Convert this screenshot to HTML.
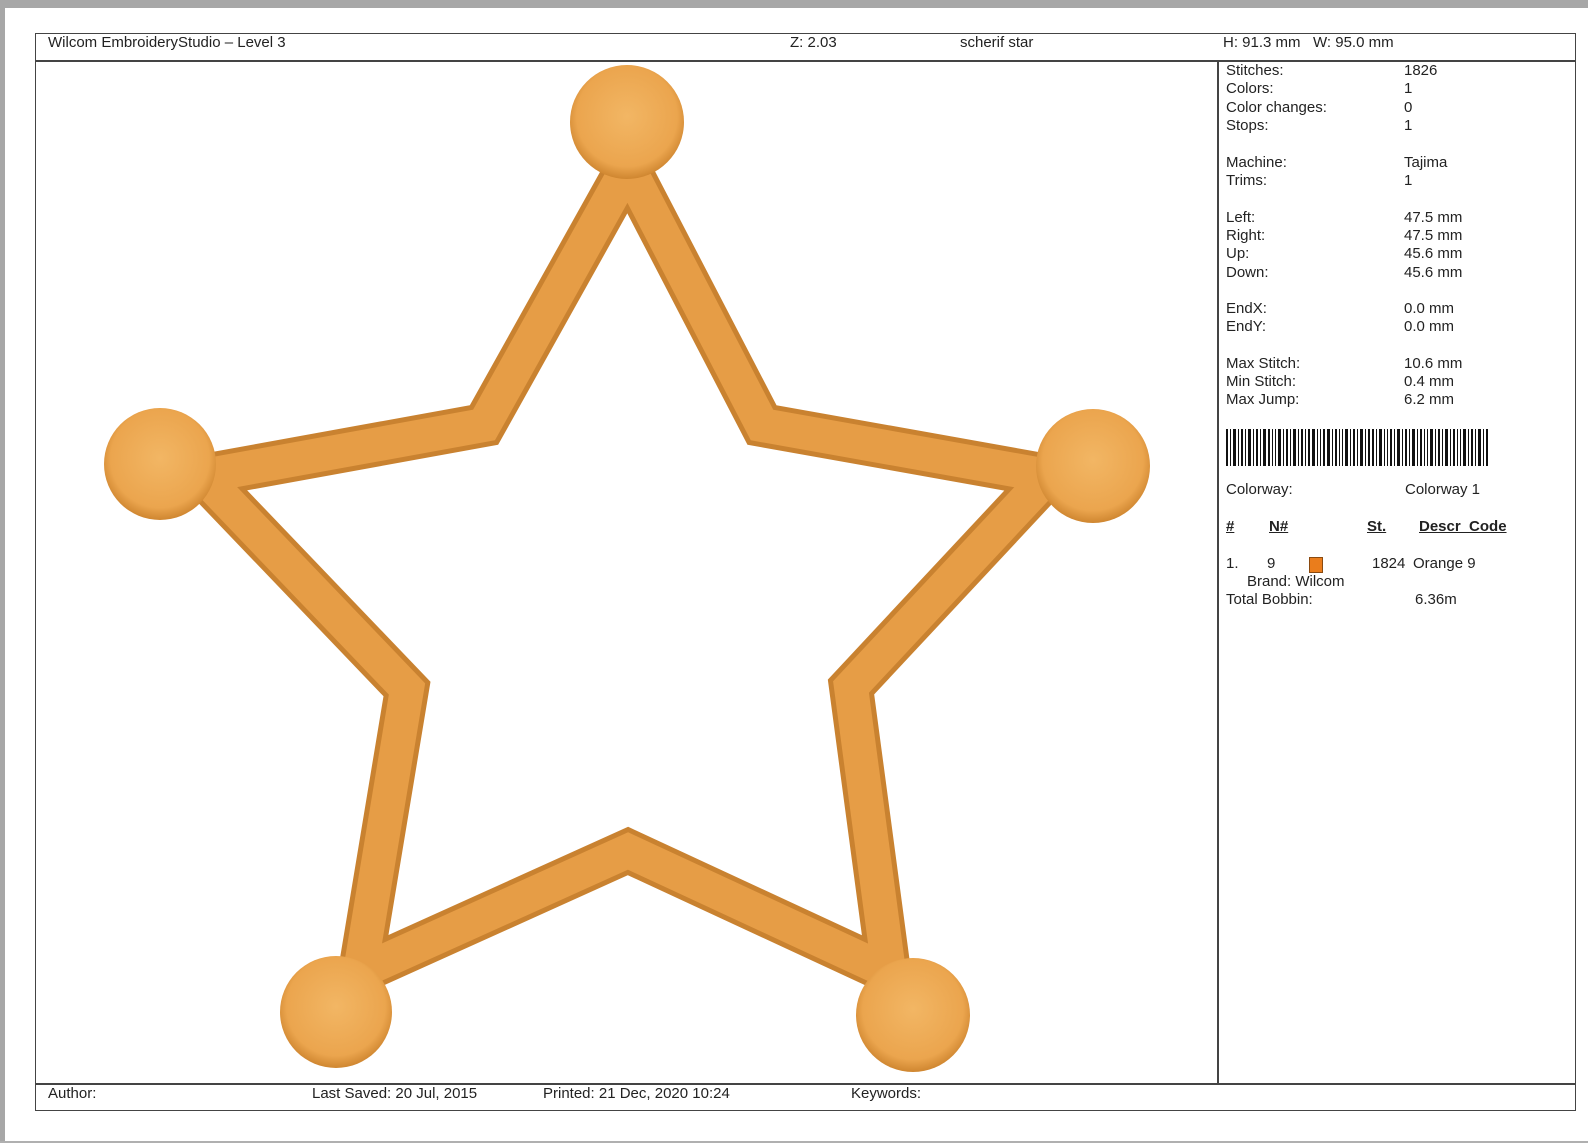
<!DOCTYPE html>
<html><head><meta charset="utf-8">
<style>
html,body{margin:0;padding:0;}
body{width:1588px;height:1143px;position:relative;background:#fff;overflow:hidden;font-family:"Liberation Sans",sans-serif;font-size:15px;color:#222;}
.t{position:absolute;white-space:nowrap;line-height:18px;transform:translateY(-9px);letter-spacing:0px;}
.u{text-decoration:underline;font-weight:bold;}
.r .t{margin-top:1px;}
</style></head><body>
<div style="position:absolute;left:0;top:0;width:1588px;height:8px;background:#a7a7a7"></div>
<div style="position:absolute;left:0;top:0;width:5px;height:1143px;background:#a7a7a7"></div>
<div style="position:absolute;left:0;top:1141px;width:1588px;height:2px;background:#b0b0b0"></div>
<div style="position:absolute;left:35px;top:33px;width:1541px;height:1078px;border:1.5px solid #444;box-sizing:border-box"></div>
<div style="position:absolute;left:35px;top:60px;width:1541px;height:1.5px;background:#444"></div>
<div style="position:absolute;left:35px;top:1083px;width:1541px;height:1.5px;background:#444"></div>
<div style="position:absolute;left:1217px;top:60px;width:1.5px;height:1024px;background:#444"></div>

<div class="t" style="left:48px;top:43px">Wilcom EmbroideryStudio – Level 3</div>
<div class="t" style="left:790px;top:43px">Z: 2.03</div>
<div class="t" style="left:960px;top:43px">scherif star</div>
<div class="t" style="left:1223px;top:43px">H: 91.3 mm&nbsp;&nbsp;&nbsp;W: 95.0 mm</div>

<div class="t" style="left:48px;top:1094px">Author:</div>
<div class="t" style="left:312px;top:1094px">Last Saved: 20 Jul, 2015</div>
<div class="t" style="left:543px;top:1094px">Printed: 21 Dec, 2020 10:24</div>
<div class="t" style="left:851px;top:1094px">Keywords:</div>

<div class="r">
<div class="t" style="left:1226px;top:70px">Stitches:</div><div class="t" style="left:1404px;top:70px">1826</div>
<div class="t" style="left:1226px;top:88px">Colors:</div><div class="t" style="left:1404px;top:88px">1</div>
<div class="t" style="left:1226px;top:107px">Color changes:</div><div class="t" style="left:1404px;top:107px">0</div>
<div class="t" style="left:1226px;top:125px">Stops:</div><div class="t" style="left:1404px;top:125px">1</div>
<div class="t" style="left:1226px;top:162px">Machine:</div><div class="t" style="left:1404px;top:162px">Tajima</div>
<div class="t" style="left:1226px;top:180px">Trims:</div><div class="t" style="left:1404px;top:180px">1</div>
<div class="t" style="left:1226px;top:217px">Left:</div><div class="t" style="left:1404px;top:217px">47.5 mm</div>
<div class="t" style="left:1226px;top:235px">Right:</div><div class="t" style="left:1404px;top:235px">47.5 mm</div>
<div class="t" style="left:1226px;top:253px">Up:</div><div class="t" style="left:1404px;top:253px">45.6 mm</div>
<div class="t" style="left:1226px;top:272px">Down:</div><div class="t" style="left:1404px;top:272px">45.6 mm</div>
<div class="t" style="left:1226px;top:308px">EndX:</div><div class="t" style="left:1404px;top:308px">0.0 mm</div>
<div class="t" style="left:1226px;top:326px">EndY:</div><div class="t" style="left:1404px;top:326px">0.0 mm</div>
<div class="t" style="left:1226px;top:363px">Max Stitch:</div><div class="t" style="left:1404px;top:363px">10.6 mm</div>
<div class="t" style="left:1226px;top:381px">Min Stitch:</div><div class="t" style="left:1404px;top:381px">0.4 mm</div>
<div class="t" style="left:1226px;top:399px">Max Jump:</div><div class="t" style="left:1404px;top:399px">6.2 mm</div>
</div>

<svg style="position:absolute;left:1226px;top:429px" width="262" height="37" viewBox="0 0 262 37">
<g fill="#111">
<rect x="0" width="2" height="37"/><rect x="4" width="1" height="37"/><rect x="7" width="3" height="37"/><rect x="12" width="1" height="37"/><rect x="15" width="2" height="37"/><rect x="19" width="1" height="37"/><rect x="22" width="3" height="37"/><rect x="27" width="1" height="37"/><rect x="30" width="2" height="37"/><rect x="34" width="1" height="37"/><rect x="37" width="3" height="37"/><rect x="42" width="2" height="37"/><rect x="46" width="1" height="37"/><rect x="49" width="1" height="37"/><rect x="52" width="3" height="37"/><rect x="57" width="1" height="37"/><rect x="60" width="2" height="37"/><rect x="64" width="1" height="37"/><rect x="67" width="3" height="37"/><rect x="72" width="1" height="37"/><rect x="75" width="2" height="37"/><rect x="79" width="1" height="37"/><rect x="82" width="2" height="37"/><rect x="86" width="3" height="37"/><rect x="91" width="1" height="37"/><rect x="94" width="1" height="37"/><rect x="97" width="2" height="37"/><rect x="101" width="3" height="37"/><rect x="106" width="1" height="37"/><rect x="109" width="2" height="37"/><rect x="113" width="1" height="37"/><rect x="116" width="1" height="37"/><rect x="119" width="3" height="37"/><rect x="124" width="1" height="37"/><rect x="127" width="2" height="37"/><rect x="131" width="1" height="37"/><rect x="134" width="3" height="37"/><rect x="139" width="1" height="37"/><rect x="142" width="2" height="37"/><rect x="146" width="2" height="37"/><rect x="150" width="1" height="37"/><rect x="153" width="3" height="37"/><rect x="158" width="1" height="37"/><rect x="161" width="1" height="37"/><rect x="164" width="2" height="37"/><rect x="168" width="1" height="37"/><rect x="171" width="3" height="37"/><rect x="176" width="1" height="37"/><rect x="179" width="2" height="37"/><rect x="183" width="1" height="37"/><rect x="186" width="3" height="37"/><rect x="191" width="1" height="37"/><rect x="194" width="2" height="37"/><rect x="198" width="1" height="37"/><rect x="201" width="1" height="37"/><rect x="204" width="3" height="37"/><rect x="209" width="1" height="37"/><rect x="212" width="2" height="37"/><rect x="216" width="1" height="37"/><rect x="219" width="3" height="37"/><rect x="224" width="1" height="37"/><rect x="227" width="2" height="37"/><rect x="231" width="1" height="37"/><rect x="234" width="1" height="37"/><rect x="237" width="3" height="37"/><rect x="242" width="1" height="37"/><rect x="245" width="2" height="37"/><rect x="249" width="1" height="37"/><rect x="252" width="3" height="37"/><rect x="257" width="1" height="37"/><rect x="260" width="2" height="37"/>
</g></svg>

<div class="t" style="left:1226px;top:490px">Colorway:</div><div class="t" style="left:1405px;top:490px">Colorway 1</div>
<div class="t u" style="left:1226px;top:527px">#</div>
<div class="t u" style="left:1269px;top:527px">N#</div>
<div class="t u" style="left:1367px;top:527px">St.</div>
<div class="t u" style="left:1419px;top:527px">Descr_Code</div>
<div class="t" style="left:1226px;top:564px">1.</div>
<div class="t" style="left:1267px;top:564px">9</div>
<div style="position:absolute;left:1309px;top:557px;width:12px;height:14px;background:#ea7d1c;border:1px solid #8a4a10"></div>
<div class="t" style="left:1372px;top:564px">1824</div>
<div class="t" style="left:1413px;top:564px">Orange 9</div>
<div class="t" style="left:1247px;top:582px">Brand: Wilcom</div>
<div class="t" style="left:1226px;top:600px">Total Bobbin:</div><div class="t" style="left:1415px;top:600px">6.36m</div>

<svg style="position:absolute;left:0;top:0" width="1588" height="1143" viewBox="0 0 1588 1143">
<defs>
<radialGradient id="cg" cx="0.5" cy="0.45" r="0.55">
<stop offset="0" stop-color="#f2b664"/><stop offset="0.8" stop-color="#eba54e"/><stop offset="1" stop-color="#cf8630"/>
</radialGradient>
</defs>
<path d="M628,167 L762,425 L1048,476 L851,687 L889,972 L628,851 L360,972 L407,689 L203,476 L484,425 Z" fill="none" stroke="#c98230" stroke-width="44" stroke-linejoin="miter" stroke-miterlimit="10"/>
<path d="M628,167 L762,425 L1048,476 L851,687 L889,972 L628,851 L360,972 L407,689 L203,476 L484,425 Z" fill="none" stroke="#e69d46" stroke-width="34" stroke-linejoin="miter" stroke-miterlimit="10"/>
<circle cx="627" cy="122" r="57" fill="url(#cg)"/>
<circle cx="160" cy="464" r="56" fill="url(#cg)"/>
<circle cx="1093" cy="466" r="57" fill="url(#cg)"/>
<circle cx="336" cy="1012" r="56" fill="url(#cg)"/>
<circle cx="913" cy="1015" r="57" fill="url(#cg)"/>
</svg>
</body></html>
